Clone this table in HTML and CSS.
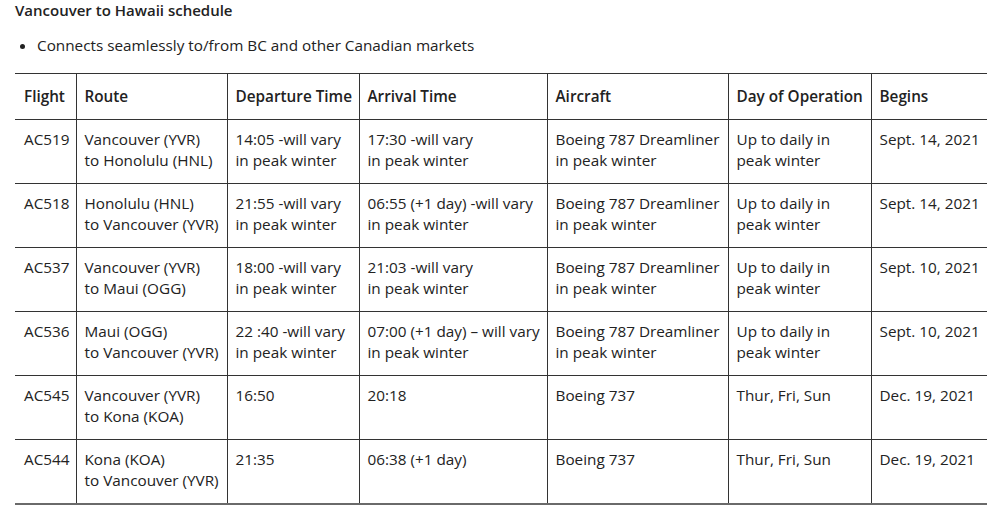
FILE: index.html
```html
<!DOCTYPE html>
<html>
<head>
<meta charset="utf-8">
<link rel="stylesheet" href="styles.css">
</head>
<body>
<div class="page">
  <h3 class="title">Vancouver to Hawaii schedule</h3>
  <ul class="bullets">
    <li>Connects seamlessly to/from BC and other Canadian markets</li>
  </ul>
  <table class="sched">
    <colgroup>
      <col class="c1"><col class="c2"><col class="c3"><col class="c4"><col class="c5"><col class="c6"><col class="c7">
    </colgroup>
    <thead>
      <tr><th>Flight</th><th>Route</th><th>Departure Time</th><th>Arrival Time</th><th>Aircraft</th><th>Day of Operation</th><th>Begins</th></tr>
    </thead>
    <tbody>
      <tr><td>AC519</td><td>Vancouver (YVR)<br>to Honolulu (HNL)</td><td>14:05 -will vary<br>in peak winter</td><td>17:30 -will vary<br>in peak winter</td><td>Boeing 787 Dreamliner<br>in peak winter</td><td>Up to daily in<br>peak winter</td><td>Sept. 14, 2021</td></tr>
      <tr><td>AC518</td><td>Honolulu (HNL)<br>to Vancouver (YVR)</td><td>21:55 -will vary<br>in peak winter</td><td>06:55 (+1 day) -will vary<br>in peak winter</td><td>Boeing 787 Dreamliner<br>in peak winter</td><td>Up to daily in<br>peak winter</td><td>Sept. 14, 2021</td></tr>
      <tr><td>AC537</td><td>Vancouver (YVR)<br>to Maui (OGG)</td><td>18:00 -will vary<br>in peak winter</td><td>21:03 -will vary<br>in peak winter</td><td>Boeing 787 Dreamliner<br>in peak winter</td><td>Up to daily in<br>peak winter</td><td>Sept. 10, 2021</td></tr>
      <tr><td>AC536</td><td>Maui (OGG)<br>to Vancouver (YVR)</td><td>22 :40 -will vary<br>in peak winter</td><td>07:00 (+1 day) – will vary<br>in peak winter</td><td>Boeing 787 Dreamliner<br>in peak winter</td><td>Up to daily in<br>peak winter</td><td>Sept. 10, 2021</td></tr>
      <tr><td>AC545</td><td>Vancouver (YVR)<br>to Kona (KOA)</td><td>16:50</td><td>20:18</td><td>Boeing 737</td><td>Thur, Fri, Sun</td><td>Dec. 19, 2021</td></tr>
      <tr><td>AC544</td><td>Kona (KOA)<br>to Vancouver (YVR)</td><td>21:35</td><td>06:38 (+1 day)</td><td>Boeing 737</td><td>Thur, Fri, Sun</td><td>Dec. 19, 2021</td></tr>
    </tbody>
  </table>
  <p class="caption">Above: Air Canada Boeing 787</p>
</div>
</body>
</html>
```

FILE: styles.css
```css
html, body {
  margin: 0;
  padding: 0;
  background: #fff;
}
body {
  font-family: "Open Sans", "Liberation Sans", sans-serif;
  color: #222;
  font-size: 15.3px;
}
.page {
  padding: 0 13px 0 15px;
}
.title {
  margin: 0;
  font-size: 15px;
  font-weight: 600;
  line-height: 20px;
}
.bullets {
  margin: 15px 0 17px 0;
  padding-left: 22px;
  line-height: 21px;
}
.sched {
  border-collapse: collapse;
  table-layout: fixed;
  width: 972px;
  border-top: 1px solid #333;
  border-bottom: 2px solid #6a6a6a;
}
.c1 { width: 61px; }
.c2 { width: 151px; }
.c3 { width: 132px; }
.c4 { width: 188px; }
.c5 { width: 181px; }
.c6 { width: 143px; }
.c7 { width: 116px; }
.sched th, .sched td {
  text-align: left;
  vertical-align: top;
  padding: 9px 4px 12px 8px;
  line-height: 21px;
  border-left: 1px solid #333;
  border-bottom: 1px solid #333;
  white-space: nowrap;
}
.sched th {
  font-weight: 600;
  padding-top: 12px;
  padding-bottom: 12px;
}
.sched th:first-child, .sched td:first-child {
  border-left: none;
  padding-left: 9px;
}
.caption {
  margin: 3px 0 0 0;
  font-weight: 600;
  font-size: 14px;
}
```
